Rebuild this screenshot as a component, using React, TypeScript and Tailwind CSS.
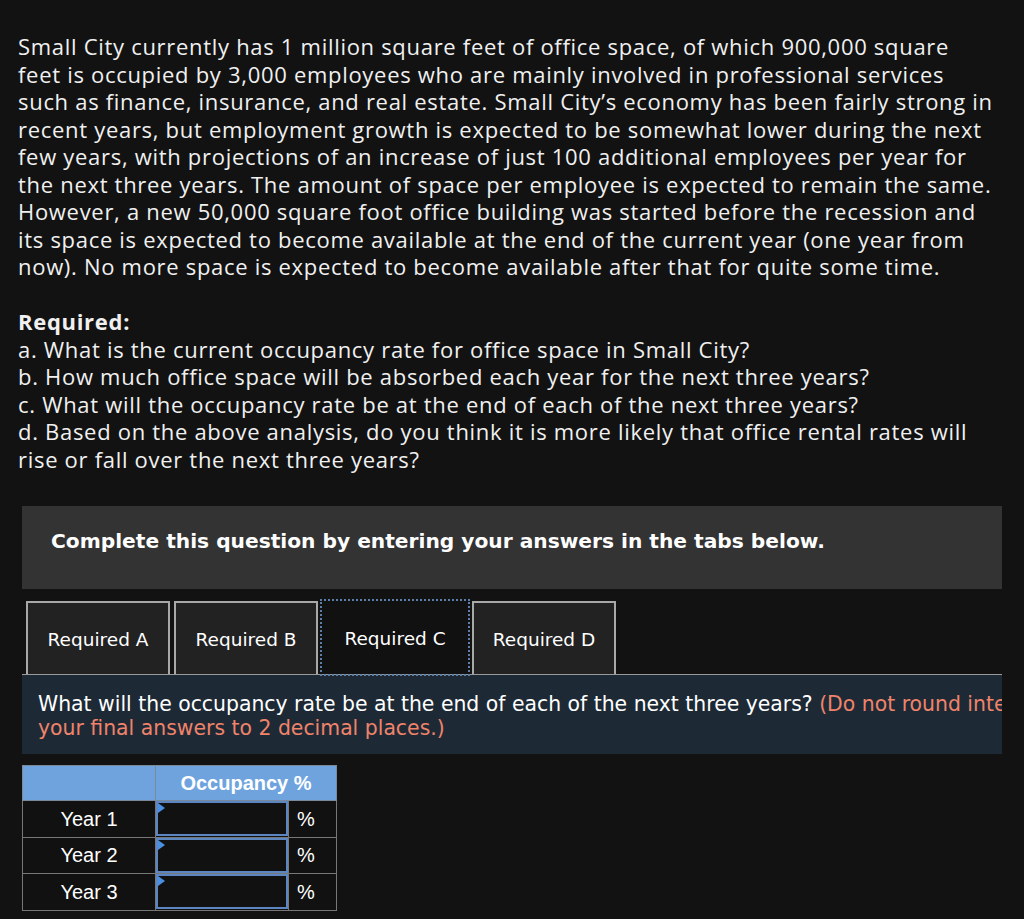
import React from "react";

const paragraph = [
  "Small City currently has 1 million square feet of office space, of which 900,000 square",
  "feet is occupied by 3,000 employees who are mainly involved in professional services",
  "such as finance, insurance, and real estate. Small City’s economy has been fairly strong in",
  "recent years, but employment growth is expected to be somewhat lower during the next",
  "few years, with projections of an increase of just 100 additional employees per year for",
  "the next three years. The amount of space per employee is expected to remain the same.",
  "However, a new 50,000 square foot office building was started before the recession and",
  "its space is expected to become available at the end of the current year (one year from",
  "now). No more space is expected to become available after that for quite some time.",
];

const required = [
  "a. What is the current occupancy rate for office space in Small City?",
  "b. How much office space will be absorbed each year for the next three years?",
  "c. What will the occupancy rate be at the end of each of the next three years?",
  "d. Based on the above analysis, do you think it is more likely that office rental rates will",
  "rise or fall over the next three years?",
];

const tabs = ["Required A", "Required B", "Required C", "Required D"];

export default function App() {
  return (
    <div className="min-h-[919px] w-[1024px] bg-[#121212] text-white overflow-hidden">
      <div
        className="pt-[33px] px-[18px] text-[22px] leading-[27.5px] tracking-[0.7px] text-[#f0f0f0]"
        style={{ fontFamily: '"Open Sans", "Lato", sans-serif' }}
      >
        {paragraph.map((l) => (
          <div key={l} className="whitespace-nowrap">{l}</div>
        ))}
        <div className="mt-[27.5px] font-bold">Required:</div>
        {required.map((l) => (
          <div key={l} className="whitespace-nowrap">{l}</div>
        ))}
      </div>

      <div className="mx-[22px] mt-[33px]" style={{ fontFamily: '"DejaVu Sans", Verdana, sans-serif' }}>
        <div className="h-[83px] bg-[#333333] pl-[29px] pt-[22px] text-[20.2px] leading-[26px] font-bold text-white">
          Complete this question by entering your answers in the tabs below.
        </div>

        <div className="flex gap-[4px] pl-[4px] mt-[12px] h-[73px]">
          {tabs.map((t, i) => (
            <div
              key={t}
              className={
                i === 2
                  ? "w-[146px] h-full flex items-center justify-center pt-[2px] bg-[#111111] text-[18.5px] text-white outline-2 outline-dotted outline-[#5a7fa8]"
                  : "w-[144px] h-full flex items-center justify-center pt-[2px] bg-[#222222] border-2 border-b-0 border-[#a8a8a8] text-[18.5px] text-white"
              }
            >
              {t}
            </div>
          ))}
        </div>

        <div className="h-[80px] bg-[#1d2a36] border-t border-[#9a9a9a] pl-[16px] pt-[17px] text-[20.4px] leading-[24px] overflow-hidden">
          <div className="whitespace-nowrap">
            What will the occupancy rate be at the end of each of the next three years?{" "}
            <span className="text-[#f0836a]">(Do not round intermediate calculations. Round</span>
          </div>
          <div className="whitespace-nowrap text-[#f0836a]">your final answers to 2 decimal places.)</div>
        </div>

        <table
          className="mt-[11px] border-collapse text-[20px]"
          style={{ fontFamily: '"Liberation Sans", Arial, sans-serif' }}
        >
          <thead>
            <tr className="h-[35px] bg-[#6fa3de]">
              <th className="w-[133px] border border-[#7a8a9a]"></th>
              <th colSpan={2} className="border border-[#7a8a9a] font-bold text-white text-center">
                Occupancy %
              </th>
            </tr>
          </thead>
          <tbody>
            {["Year 1", "Year 2", "Year 3"].map((y) => (
              <tr key={y} className="h-[36.5px]">
                <td className="border border-[#777777] bg-[#111111] text-center text-white">{y}</td>
                <td className="w-[133px] border border-[#777777] p-0 bg-[#111111]">
                  <div className="relative h-[35px] border-2 border-[#5b86c2] bg-[#111111]">
                    <div className="absolute left-0 top-0 w-0 h-0 border-t-[5px] border-b-[5px] border-l-[7px] border-t-transparent border-b-transparent border-l-[#4a90e2]"></div>
                  </div>
                </td>
                <td className="w-[48px] border border-[#777777] bg-[#111111] pl-[8px] text-white">%</td>
              </tr>
            ))}
          </tbody>
        </table>
      </div>
    </div>
  );
}
